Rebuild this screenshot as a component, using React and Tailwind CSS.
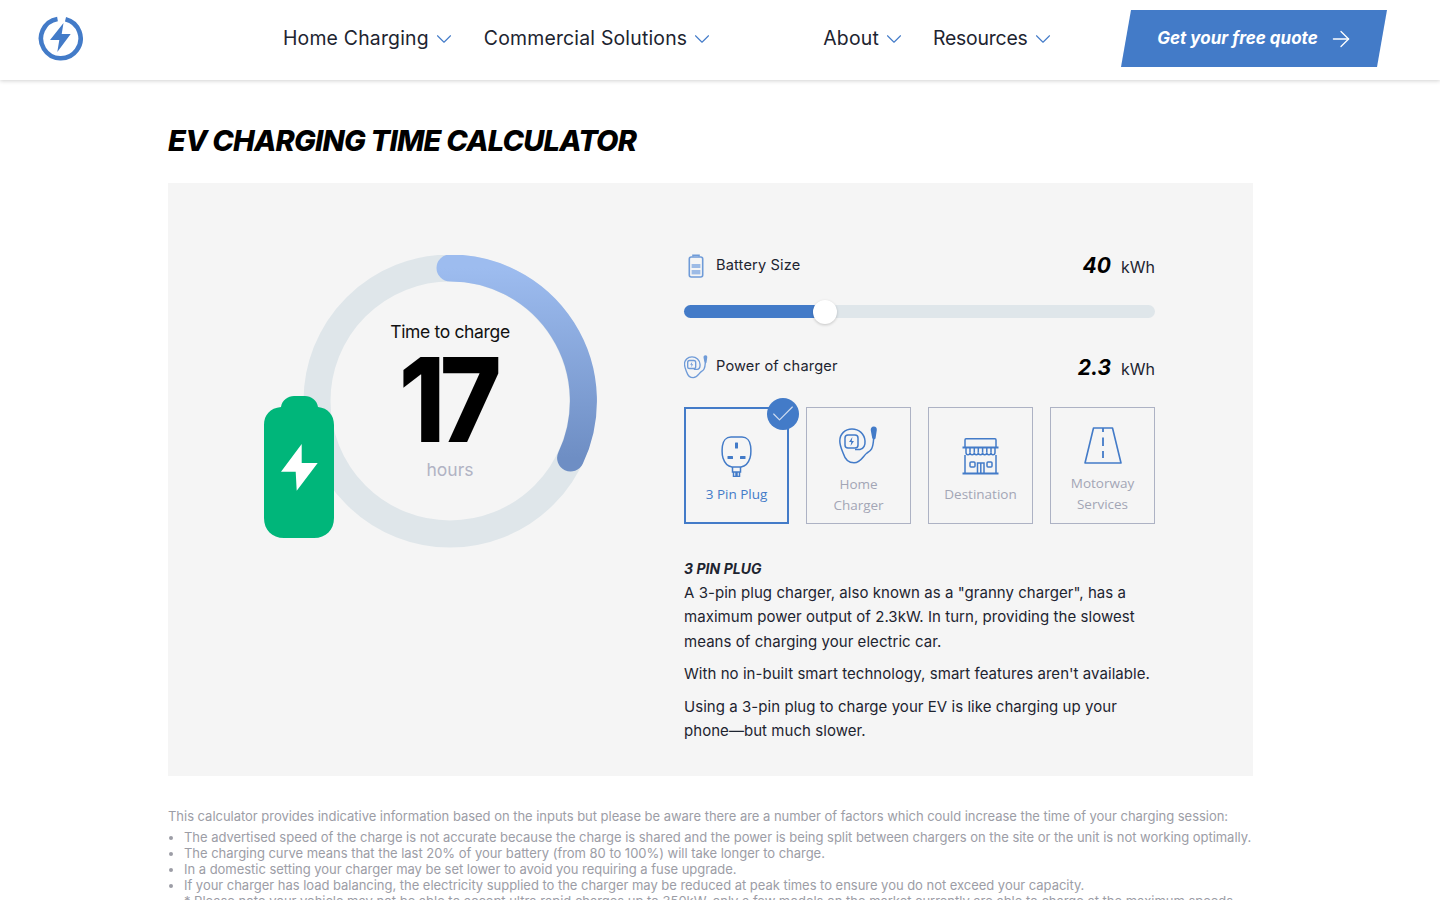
import { ArrowRight, Check, ChevronDown } from 'lucide-react';

const BLUE = '#437bc8';

function Logo() {
  return (
    <svg className="-mt-1" width="45" height="45" viewBox="0 0 45 45" fill="none">
      <path d="M27.5 3.2 A19.8 19.8 0 1 1 19.5 2.9" stroke={BLUE} strokeWidth="4.6" />
      <path d="M25.5 7 L12 24 H21.3 L19.3 36 L32.7 18 H23.7 Z" fill={BLUE} />
    </svg>
  );
}

function BatteryIcon() {
  return (
    <svg width="16" height="24" viewBox="0 0 16 24" fill="none" stroke="#6f9bd8" strokeWidth="1.6">
      <path d="M5 2.5 V1.2 H11 V2.5" />
      <rect x="1.3" y="3" width="13.4" height="20" rx="2" />
      <rect x="3.6" y="10" width="8.8" height="4" fill="#9dbbe6" stroke="none" />
      <rect x="3.6" y="16" width="8.8" height="4.4" fill="#9dbbe6" stroke="none" />
    </svg>
  );
}

// wall charger with its cable, used small in the row and large in the card
function ChargerIcon({ size, color = BLUE, weight = 1.5 }) {
  return (
    <svg width={size} height={size} viewBox="0 0 39 39" fill="none" stroke={color} strokeWidth={weight}>
      <path d="M16 23.4 H21 C25 23 26.3 18.5 26 15 C25.6 8 20 3 13 3 C6 3 0.8 8 0.8 15 C0.8 20 3 24 4.5 28 C6 33 9 36.8 15 36.8 C22 36.8 24 30 28 27 C32 24.5 34 23 34.6 13" />
      <rect x="6" y="9" width="13" height="13" rx="3" />
      <path d="M13.4 11 L10 16 H12.3 L11.6 20 L15 15 H12.7 Z" fill={color} stroke="none" />
      <path d="M34.8 0.5 C37 0.5 38 2 37.8 4 L36.6 12 C36.4 13.8 33.6 13.8 33.2 12 L31.8 4.6 C31.4 2.4 32.6 0.5 34.8 0.5 Z" fill={color} stroke="none" />
    </svg>
  );
}

function PlugIcon() {
  return (
    <svg width="31" height="41" viewBox="0 0 31 41" fill="none" stroke={BLUE} strokeWidth="1.5">
      <path d="M10 1 H21 C26 1 29 5 29.6 10 C30 14 30.4 18 29 22 C27.4 27 24 30.4 20 31 H11 C7 30.4 3.6 27 2 22 C0.6 18 1 14 1.4 10 C2 5 5 1 10 1 Z" />
      <rect x="14" y="6.5" width="3" height="6" rx="0.5" fill={BLUE} stroke="none" />
      <rect x="6.5" y="20" width="5.5" height="3" rx="0.5" fill={BLUE} stroke="none" />
      <rect x="19" y="20" width="5.5" height="3" rx="0.5" fill={BLUE} stroke="none" />
      <path d="M11.5 31 V36 H19.5 V31 M12.5 36 V40.5 H15 V36 M16 36 V40.5 H18.5 V36" />
    </svg>
  );
}

function StoreIcon() {
  return (
    <svg width="37" height="37" viewBox="0 0 37 37" fill="none" stroke={BLUE} strokeWidth="1.5">
      <path d="M3 9 V2 C3 1.2 3.5 0.8 4 0.8 H33 C33.5 0.8 34 1.2 34 2 V9" />
      <path d="M0.5 9.5 H36.5" strokeWidth="2" />
      <path d="M4 9.5 V14.5 C4 17.5 8 17.5 8 14.5 C8 17.5 12.3 17.5 12.3 14.5 C12.3 17.5 16.3 17.5 16.3 14.5 C16.3 17.5 20.6 17.5 20.6 14.5 C20.6 17.5 24.8 17.5 24.8 14.5 C24.8 17.5 29 17.5 29 14.5 C29 17.5 33 17.5 33 14.5 V9.5" />
      <path d="M8 9.5 V14.5 M12.3 9.5 V14.5 M16.3 9.5 V14.5 M20.6 9.5 V14.5 M24.8 9.5 V14.5 M29 9.5 V14.5" />
      <path d="M3 17 V35.5 M34 17 V35.5" />
      <path d="M0.5 35.5 H36.5" strokeWidth="2" />
      <rect x="8" y="24" width="5" height="5" rx="1" />
      <rect x="25" y="24" width="5" height="5" rx="1" />
      <path d="M15.5 35.5 V25 H22 V35.5 M18.8 25 V35.5" />
    </svg>
  );
}

function RoadIcon() {
  return (
    <svg width="38" height="37" viewBox="0 0 38 37" fill="none" stroke={BLUE} strokeWidth="1.6">
      <path d="M9.5 1 H28.5 L37 36 H1 Z" strokeLinejoin="round" />
      <path d="M19 1 V5 M19 10.5 V19 M19 24 V31" strokeWidth="1.8" />
    </svg>
  );
}

function NavItem({ label, className, labelClass }) {
  return (
    <a className={`flex items-center gap-[2px] text-[19.4px] text-[#1d2430] ${className || ''}`}>
      <span className={labelClass || 'tracking-[0.2px]'}>{label}</span>
      <ChevronDown className="w-[26px] h-[26px] text-[#437bc8]" strokeWidth={1} />
    </a>
  );
}

function ChargeDial() {
  return (
    <div className="relative w-[294px] h-[294px]">
      <svg width="294" height="294" viewBox="0 0 294 294" fill="none">
        <defs>
          <linearGradient id="dial" x1="0" y1="0" x2="0" y2="1">
            <stop offset="0%" stopColor="#9dbcef" />
            <stop offset="100%" stopColor="#6e8ec4" />
          </linearGradient>
        </defs>
        <circle cx="147" cy="146" r="133" stroke="#dfe6ea" strokeWidth="27" />
        <path d="M147 13 A133 133 0 0 1 267.6 203" stroke="url(#dial)" strokeWidth="27" strokeLinecap="round" />
      </svg>
      {/* readout sits in the hole of the ring */}
      <div className="absolute inset-0 flex flex-col items-center">
        <p className="mt-[65px] text-[17.5px] leading-6 text-[#111] tracking-[-0.35px]">Time to charge</p>
        <p className="text-[117px] leading-[100px] font-extrabold text-black tracking-[-6px] mt-[6px] pr-[6px] scale-x-[0.9]">17</p>
        <p className="mt-[8px] text-[17.5px] leading-6 text-[#b1b3c4]">hours</p>
      </div>
      <svg className="absolute left-[-39px] top-[141px]" width="70" height="142" viewBox="0 0 70 142">
        <path d="M17 11 C18 4 24 0 30 0 H41 C47 0 53 4 54 11 C64 12 70 19 70 29 V122 C70 134 62 142 50 142 H20 C8 142 0 134 0 122 V29 C0 19 6 12 17 11 Z" fill="#00b67a" />
        <path d="M37.7 48 L17 75.7 H31.7 L32.7 94.7 L53.7 67 H37.7 Z" fill="#fff" />
      </svg>
    </div>
  );
}

function ValueRow({ icon, label, value }) {
  return (
    <div className="flex items-center justify-between">
      <div className="flex items-center h-6">
        <div className="w-8 flex justify-center pr-[8px]">{icon}</div>
        <span className="text-[14.6px] text-[#1d2430] tracking-[0.15px]">{label}</span>
      </div>
      <div className="flex items-baseline gap-[10px]">
        <span className="text-[21px] font-bold italic text-black">{value}</span>
        <span className="text-[16px] text-[#1d2430]">kWh</span>
      </div>
    </div>
  );
}

function OptionCard({ icon, lines, active }) {
  return (
    <div
      className={`relative h-[117px] flex flex-col items-center justify-center font-['Open_Sans',sans-serif] text-[13.5px] leading-[21px] ${
        active ? 'pt-[9px] border-2 border-[#437bc8] text-[#437bc8]' : 'pt-[11px] border border-[#adb2c4] text-[#a3a6b5]'
      }`}
    >
      <div className={active ? 'mb-[7px]' : 'mb-[9px]'}>{icon}</div>
      {lines.map((line) => (
        <span key={line}>{line}</span>
      ))}
      {active && (
        <span className="absolute right-[-12px] top-[-11px] w-8 h-8 rounded-full bg-[#437bc8] flex items-center justify-center">
          <Check className="w-7 h-7 text-[#cfdcf0]" strokeWidth={1} />
        </span>
      )}
    </div>
  );
}

export default function App() {
  return (
    <div className="h-[900px] overflow-hidden bg-white font-['Inter',sans-serif]">
      <header className="h-20 flex items-center pl-[38px] pr-[53px] shadow-[0_1px_4px_rgba(0,0,0,0.18)]">
        <Logo />
        <nav className="flex items-center ml-[200px] -mt-[2px]">
          <NavItem label="Home Charging" />
          <NavItem label="Commercial Solutions" className="ml-[27px]" />
          <NavItem label="About" className="ml-[108px]" />
          <NavItem label="Resources" className="ml-[26px]" labelClass="tracking-[-0.2px]" />
        </nav>
        <a className="ml-auto w-[266px] h-[57px] mt-[-3px] pl-[3px] flex items-center justify-center gap-[10px] bg-[#437bc8] text-white text-[17px] font-bold italic [clip-path:polygon(10px_0,100%_0,calc(100%-10px)_100%,0_100%)]">
          Get your free quote
          <ArrowRight className="w-[26px] h-[26px]" strokeWidth={1.2} />
        </a>
      </header>

      <main className="w-[1085px] ml-[168px]">
        <h1 className="mt-[43px] text-[29px] leading-9 font-extrabold italic text-black tracking-[-0.77px]">
          EV CHARGING TIME CALCULATOR
        </h1>

        <section className="mt-[24px] h-[593px] bg-[#f5f5f5] flex">
          <div className="w-[516px] pl-[135px] pt-[72px]">
            <ChargeDial />
          </div>

          <div className="w-[471px] pt-[67px]">
            <ValueRow icon={<BatteryIcon />} label="Battery Size" value="40" />
            <div className="relative mt-[23px] mb-[34px] h-[13px] rounded-full bg-[#dfe6ea]">
              <div className="h-full w-[141px] rounded-full bg-[#437bc8]" />
              <span className="absolute left-[129px] top-[-5px] w-6 h-6 rounded-full bg-white shadow-[0_1px_3px_rgba(0,0,0,0.2)]" />
            </div>
            <ValueRow icon={<ChargerIcon size={24} color="#6f9bd8" weight={2.2} />} label="Power of charger" value="2.3" />
            <div className="grid grid-cols-4 gap-[17px] mt-[24px]">
              <OptionCard active icon={<PlugIcon />} lines={['3 Pin Plug']} />
              <OptionCard icon={<ChargerIcon size={39} />} lines={['Home', 'Charger']} />
              <OptionCard icon={<StoreIcon />} lines={['Destination']} />
              <OptionCard icon={<RoadIcon />} lines={['Motorway', 'Services']} />
            </div>
            <div className="mt-[33px] text-[15px] leading-[24.5px] text-[#1d2430] tracking-[0.05px]">
              <p className="font-bold italic text-[14px] leading-[23.5px]">3 PIN PLUG</p>
              <p>
                A 3-pin plug charger, also known as a "granny charger", has a maximum power output of 2.3kW. In turn,
                providing the slowest means of charging your electric car.
              </p>
              <p className="mt-2">With no in-built smart technology, smart features aren't available.</p>
              <p className="mt-2">
                Using a 3-pin plug to charge your EV is like charging up your phone—but much slower.
              </p>
            </div>
          </div>
        </section>

        <div className="mt-[32px] text-[13px] leading-4 text-[#9c9da6] tracking-[-0.03px]">
          <p className="mb-[5px]">
            This calculator provides indicative information based on the inputs but please be aware there are a number
            of factors which could increase the time of your charging session:
          </p>
          <ul className="list-disc pl-4 whitespace-nowrap">
            <li>
              The advertised speed of the charge is not accurate because the charge is shared and the power is being
              split between chargers on the site or the unit is not working optimally.
            </li>
            <li>The charging curve means that the last 20% of your battery (from 80 to 100%) will take longer to charge.</li>
            <li>In a domestic setting your charger may be set lower to avoid you requiring a fuse upgrade.</li>
            <li>If your charger has load balancing, the electricity supplied to the charger may be reduced at peak times to ensure you do not exceed your capacity.</li>
            <li className="list-none">
              * Please note your vehicle may not be able to accept ultra rapid charges up to 350kW, only a few models on
              the market currently are able to charge at the maximum speeds.
            </li>
          </ul>
        </div>
      </main>
    </div>
  );
}
